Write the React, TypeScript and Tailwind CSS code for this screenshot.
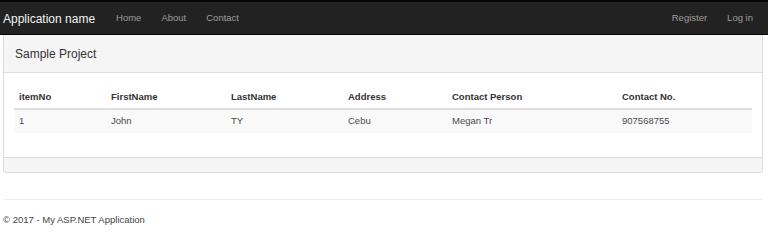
import React from "react";

const cols = ["itemNo", "FirstName", "LastName", "Address", "Contact Person", "Contact No."];
const row = ["1", "John", "TY", "Cebu", "Megan Tr", "907568755"];

export default function App() {
  return (
    <div className="w-[768px] h-[235px] bg-white text-[#333] overflow-hidden" style={{ fontFamily: '"Liberation Sans", Arial, sans-serif' }}>
      <nav className="h-[35px] bg-[#222] border-t-2 border-t-[#050505] border-b border-b-[#080808] flex items-center">
        <span className="ml-[3px] text-[12px] text-[#f2f2f2] leading-none mt-[1px]">Application name</span>
        <div className="flex items-center ml-[21px] gap-[20px] text-[9.5px] text-[#9d9d9d] mt-[1px]">
          <span>Home</span>
          <span>About</span>
          <span>Contact</span>
        </div>
        <div className="flex items-center ml-auto mr-[15px] gap-[20px] text-[9.5px] text-[#9d9d9d] mt-[1px]">
          <span>Register</span>
          <span>Log in</span>
        </div>
      </nav>
      <div className="ml-[3px] w-[760px] border border-t-0 border-[#ddd] rounded-b-[3px]">
        <div className="h-[38px] bg-[#f5f5f5] border-b border-[#ddd] flex items-center pl-[11px] text-[12px]">
          Sample Project
        </div>
        <div className="pt-[13px] pb-[24px] px-[10px]">
          <div className="grid grid-cols-[92px_120px_117px_104px_170px_135px] h-[24px] items-center border-b-2 border-[#ddd] text-[9.5px] font-bold">
            {cols.map((c) => (
              <div key={c} className="pl-[5px]">{c}</div>
            ))}
          </div>
          <div className="grid grid-cols-[92px_120px_117px_104px_170px_135px] h-[23px] items-center bg-[#f9f9f9] text-[9.5px] text-[#4a4a4a]">
            {row.map((c, i) => (
              <div key={i} className="pl-[5px]">{c}</div>
            ))}
          </div>
        </div>
        <div className="h-[15px] bg-[#f5f5f5] border-t border-[#ddd] rounded-b-[3px]"></div>
      </div>
      <div className="ml-[3px] w-[760px] mt-[26px] border-t border-[#eee]"></div>
      <div className="ml-[3px] mt-[13px] text-[9.5px] text-[#444]">© 2017 - My ASP.NET Application</div>
    </div>
  );
}
